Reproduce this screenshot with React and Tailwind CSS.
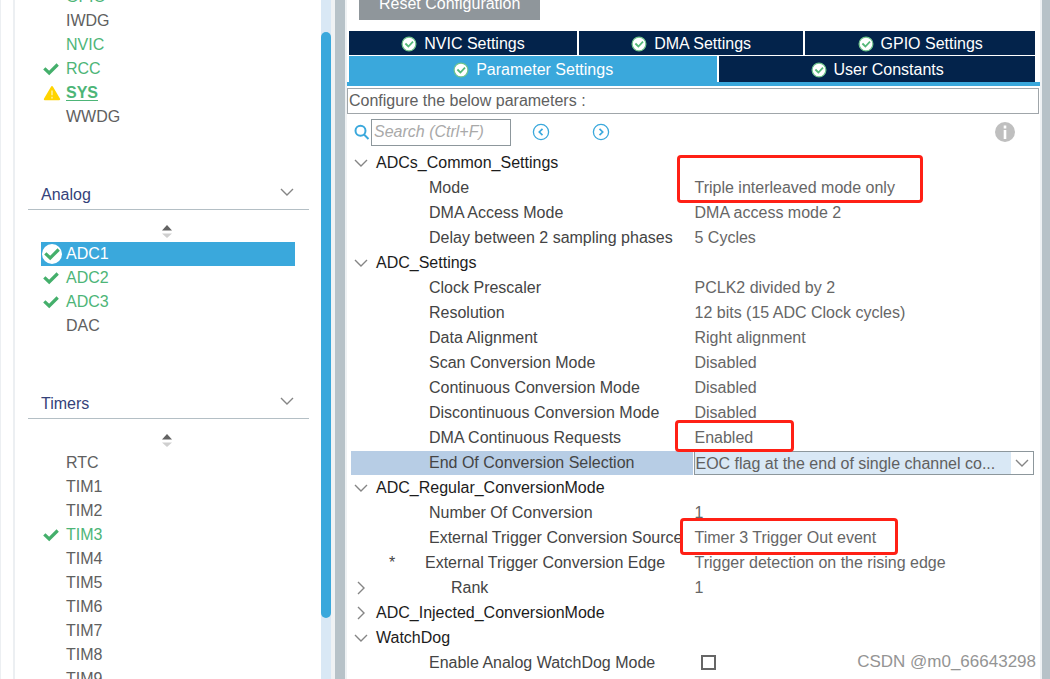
import React, { useState } from 'react';
import clsx from 'clsx';

const systemItems = [
  { name: 'GPIO', status: 'on' },
  { name: 'IWDG' },
  { name: 'NVIC', status: 'on' },
  { name: 'RCC', status: 'ok' },
  { name: 'SYS', status: 'warning' },
  { name: 'WWDG' },
];

const analogItems = [
  { name: 'ADC1', status: 'active' },
  { name: 'ADC2', status: 'ok' },
  { name: 'ADC3', status: 'ok' },
  { name: 'DAC' },
];

const timerItems = [
  { name: 'RTC' },
  { name: 'TIM1' },
  { name: 'TIM2' },
  { name: 'TIM3', status: 'ok' },
  { name: 'TIM4' },
  { name: 'TIM5' },
  { name: 'TIM6' },
  { name: 'TIM7' },
  { name: 'TIM8' },
  { name: 'TIM9' },
];

const parameters = [
  { group: 'ADCs_Common_Settings', open: true },
  { name: 'Mode', value: 'Triple interleaved mode only', mark: '-left-[18px] -top-[21px] h-[48px] w-[246px]' },
  { name: 'DMA Access Mode', value: 'DMA access mode 2' },
  { name: 'Delay between 2 sampling phases', value: '5 Cycles' },
  { group: 'ADC_Settings', open: true },
  { name: 'Clock Prescaler', value: 'PCLK2 divided by 2' },
  { name: 'Resolution', value: '12 bits (15 ADC Clock cycles)' },
  { name: 'Data Alignment', value: 'Right alignment' },
  { name: 'Scan Conversion Mode', value: 'Disabled' },
  { name: 'Continuous Conversion Mode', value: 'Disabled' },
  { name: 'Discontinuous Conversion Mode', value: 'Disabled' },
  { name: 'DMA Continuous Requests', value: 'Enabled', mark: '-left-[20px] -top-[6px] h-[32px] w-[119px]' },
  { name: 'End Of Conversion Selection', type: 'select', value: 'EOC flag at the end of single channel co...' },
  { group: 'ADC_Regular_ConversionMode', open: true },
  { name: 'Number Of Conversion', value: '1' },
  { name: 'External Trigger Conversion Source', value: 'Timer 3 Trigger Out event', mark: '-left-[15px] -top-[8px] h-[37px] w-[218px]' },
  { name: 'External Trigger Conversion Edge', value: 'Trigger detection on the rising edge', starred: true },
  { name: 'Rank', value: '1', nested: true },
  { group: 'ADC_Injected_ConversionMode', open: false },
  { group: 'WatchDog', open: true },
  { name: 'Enable Analog WatchDog Mode', type: 'checkbox' },
];

const Chevron = ({ open = true, className }) => (
  <svg viewBox="0 0 14 14" className={clsx('size-[14px] shrink-0', className)} fill="none" stroke="#858585" strokeWidth="1.4">
    <path d={open ? 'M1 4l6 6 6-6' : 'M4 1l6 6-6 6'} />
  </svg>
);

const Check = () => (
  <svg viewBox="0 0 16 16" className="size-4" fill="none" stroke="#44af6b" strokeWidth="3.2">
    <path d="M1.300 7.300l4.900 4.700 8.500-8.500" />
  </svg>
);

const Warning = () => (
  <svg viewBox="0 0 18 16" className="h-4 w-[18px]">
    <path d="M9 2l7.200 12.200H1.800z" fill="#ffd400" stroke="#ffd400" strokeWidth="2" strokeLinejoin="round" />
    <path d="M9 5.500v4.700M9 11.700v1.800" stroke="#fff0a0" strokeWidth="1.500" />
  </svg>
);

const TabCheck = () => (
  <svg viewBox="0 0 16 16" className="size-4 shrink-0" fill="none">
    <circle cx="8" cy="8" r="6.900" fill="#fff" stroke="#6fc48c" strokeWidth="1.200" />
    <path d="M4.400 7.500l3 3 4.600-4.800" stroke="#55b878" strokeWidth="1.800" />
  </svg>
);

const CircleArrow = ({ d }) => (
  <svg viewBox="0 0 18 18" className="size-[18px]" fill="none" stroke="#3aa8dc">
    <circle cx="9" cy="9" r="7.600" strokeWidth="1.300" />
    <path d={d} strokeWidth="1.700" />
  </svg>
);

const StatusIcon = ({ status }) => {
  if (status === 'ok') return <Check />;
  if (status === 'warning') return <Warning />;
  if (status === 'active') {
    return (
      <span className="flex size-5 items-center justify-center rounded-full bg-white">
        <Check />
      </span>
    );
  }
  return null;
};

const PeripheralList = ({ items, className }) => (
  <ul className={clsx('ml-[27px] mr-[26px]', className)}>
    {items.map(({ name, status }) => (
      <li key={name}>
        <button
          className={clsx(
            'flex h-6 w-full items-center text-left',
            !status && 'text-[#606060]',
            status && status !== 'active' && 'text-[#4db577]',
            status === 'active' && 'bg-[#3aa8dc] text-white'
          )}
        >
          <span className={clsx('flex w-[25px] items-center', status === 'active' ? 'pl-px' : 'pl-0.5')}>
            <StatusIcon status={status} />
          </span>
          <span className={clsx(status === 'warning' && 'font-bold underline underline-offset-2')}>{name}</span>
        </button>
      </li>
    ))}
  </ul>
);

const Category = ({ title, items }) => (
  <section className="mt-[51px]">
    <h2 className="ml-[14px] mr-3 border-b border-[#b4bfc5]">
      <button className="flex h-[29px] w-full items-center justify-between pl-[13px] pr-[15px] text-[#35427a]">
        {title}
        <Chevron className="-mt-1.5" />
      </button>
    </h2>
    <div className="ml-[27px] mr-7 flex h-8 items-center justify-center pt-2.5">
      <button aria-label={`Sort ${title}`}>
        <svg viewBox="0 0 10 13" className="h-[13px] w-[10px]">
          <path d="M0 5.500L5 0l5 5.500z" fill="#636363" />
          <path d="M0 8.500L5 13l5-4.500z" fill="#cfcfcf" />
        </svg>
      </button>
    </div>
    <PeripheralList items={items} />
  </section>
);

const Tab = ({ label, active, className }) => (
  <button
    role="tab"
    aria-selected={!!active}
    className={clsx('flex items-center justify-center gap-[7px] pt-0.5 text-white', active ? 'bg-[#3aa8dc]' : 'bg-[#03234b]', className)}
  >
    <TabCheck />
    {label}
  </button>
);

const ParameterValue = ({ row }) => {
  const id = row.name.replace(/ /g, '-');
  if (row.type === 'select') {
    return (
      <div className="relative mr-1.5 h-6 border border-[#8d979c] bg-white">
        <select
          id={id}
          className="block h-full w-full appearance-none border-r-[22px] border-white bg-[#d9e8f5] pl-px text-[#606060] outline-none"
        >
          <option>{row.value}</option>
        </select>
        <Chevron className="pointer-events-none absolute top-1 right-1" />
      </div>
    );
  }
  if (row.type === 'checkbox') {
    return <input id={id} type="checkbox" className="ml-1.5 block size-[15px] appearance-none border-2 border-[#666] bg-white" />;
  }
  return (
    <div className="relative ml-px text-[#666]">
      {row.value}
      {row.mark && <span className={clsx('absolute z-10 rounded-sm border-3 border-[#ff2015]', row.mark)} />}
    </div>
  );
};

const ParameterTable = () => (
  <table className="w-full table-fixed whitespace-nowrap leading-[23px]">
    <tbody>
      {parameters.map((row) => {
        if (row.group) {
          return (
            <tr key={row.group} className="h-[25px]">
              <th colSpan={2} className="p-0 text-left font-normal text-[#1c1c1c]">
                <button className="flex items-center gap-2 pl-[7px]">
                  <Chevron open={row.open} />
                  {row.group}
                </button>
              </th>
            </tr>
          );
        }
        return (
          <tr key={row.name} className="h-[25px]">
            <th className="w-1/2 p-0 text-left font-normal text-[#444]">
              <div className={clsx('mr-px ml-1 flex h-6 items-center', row.type === 'select' && 'bg-[#b7cde5]')}>
                {row.starred && <span className="w-[74px] pl-[38px]">*</span>}
                {row.nested && (
                  <span className="w-[100px] pl-[3px]">
                    <Chevron open={false} />
                  </span>
                )}
                <label
                  htmlFor={row.type ? row.name.replace(/ /g, '-') : undefined}
                  className={clsx(!row.starred && !row.nested && 'pl-[78px]')}
                >
                  {row.name}
                </label>
              </div>
            </th>
            <td className={clsx('p-0', row.type === 'checkbox' && 'pl-px')}>
              <ParameterValue row={row} />
            </td>
          </tr>
        );
      })}
    </tbody>
  </table>
);

const App = () => {
  const [search, setSearch] = useState('');

  return (
    <div className="relative flex h-screen overflow-hidden bg-white font-['Liberation_Sans',Arial,sans-serif] text-base leading-6">
      <div className="w-[15px] shrink-0 border-x border-r-2 border-[#eceff2]" />
      <nav className="-ml-px flex w-[321px] shrink-0">
        <div className="min-w-0 flex-1">
          <PeripheralList items={systemItems} className="-mt-[15px]" />
          <Category title="Analog" items={analogItems} />
          <Category title="Timers" items={timerItems} />
        </div>
        <div className="flex w-[10px] flex-col bg-[#d9e8f5] pt-8">
          <div className="h-[586px] rounded-full bg-[#3aa8dc]" />
        </div>
        <div className="w-1 bg-[#eff2f4]" />
      </nav>
      <div className="w-[10px] shrink-0 bg-[#b7c2c8]" />

      <main className="min-w-0 flex-1 border-x-2 border-[#eff2f4]">
        <button className="-mt-3 ml-3 block h-8 bg-[#8f969b] px-5 text-white">Reset Configuration</button>
        <div role="tablist" className="mt-[11px] border-b-4 border-[#3aa8dc] pr-[5px] pl-0.5">
          <div className="flex h-6 gap-0.5">
            <Tab label="NVIC Settings" className="flex-auto" />
            <Tab label="DMA Settings" className="flex-auto" />
            <Tab label="GPIO Settings" className="flex-auto" />
          </div>
          <div className="mt-px flex h-[26px] gap-0.5">
            <Tab label="Parameter Settings" active className="flex-7" />
            <Tab label="User Constants" className="flex-6" />
          </div>
        </div>
        <p className="mt-0.5 mr-px h-[26px] border border-[#a0a6aa] pl-px text-[#606060]">Configure the below parameters :</p>
        <div className="flex h-9 items-center pr-[25px] pl-[7px]">
          <svg viewBox="0 0 16 16" className="size-4" fill="none" stroke="#3aa8dc" strokeWidth="2">
            <circle cx="6.500" cy="6.800" r="5" />
            <path d="M10 10.500l4.500 4.500" />
          </svg>
          <input
            type="text"
            aria-label="Search"
            placeholder="Search (Ctrl+F)"
            value={search}
            onChange={(e) => setSearch(e.target.value)}
            className="ml-px h-[27px] w-[140px] border border-[#8d979c] pl-0.5 outline-none placeholder:text-[#a9a9a9] placeholder:italic"
          />
          <button aria-label="Previous match" className="ml-[21px]">
            <CircleArrow d="M10.500 5.800L7.300 9l3.200 3.200" />
          </button>
          <button aria-label="Next match" className="ml-[42px]">
            <CircleArrow d="M7.500 5.800L10.700 9l-3.200 3.200" />
          </button>
          <button aria-label="Information" className="ml-auto">
            <svg viewBox="0 0 20 20" className="size-5">
              <circle cx="10" cy="10" r="10" fill="#bfbfbf" />
              <path d="M10 3.500v3M10 8v9" stroke="#fff" strokeWidth="2.600" />
            </svg>
          </button>
        </div>
        <ParameterTable />
      </main>
      <div className="w-2 shrink-0 bg-[#b7c2c8]" />
      <span className="absolute right-[14px] bottom-[5px] text-[17px] text-[#949494]">CSDN @m0_66643298</span>
    </div>
  );
};

export default App;
